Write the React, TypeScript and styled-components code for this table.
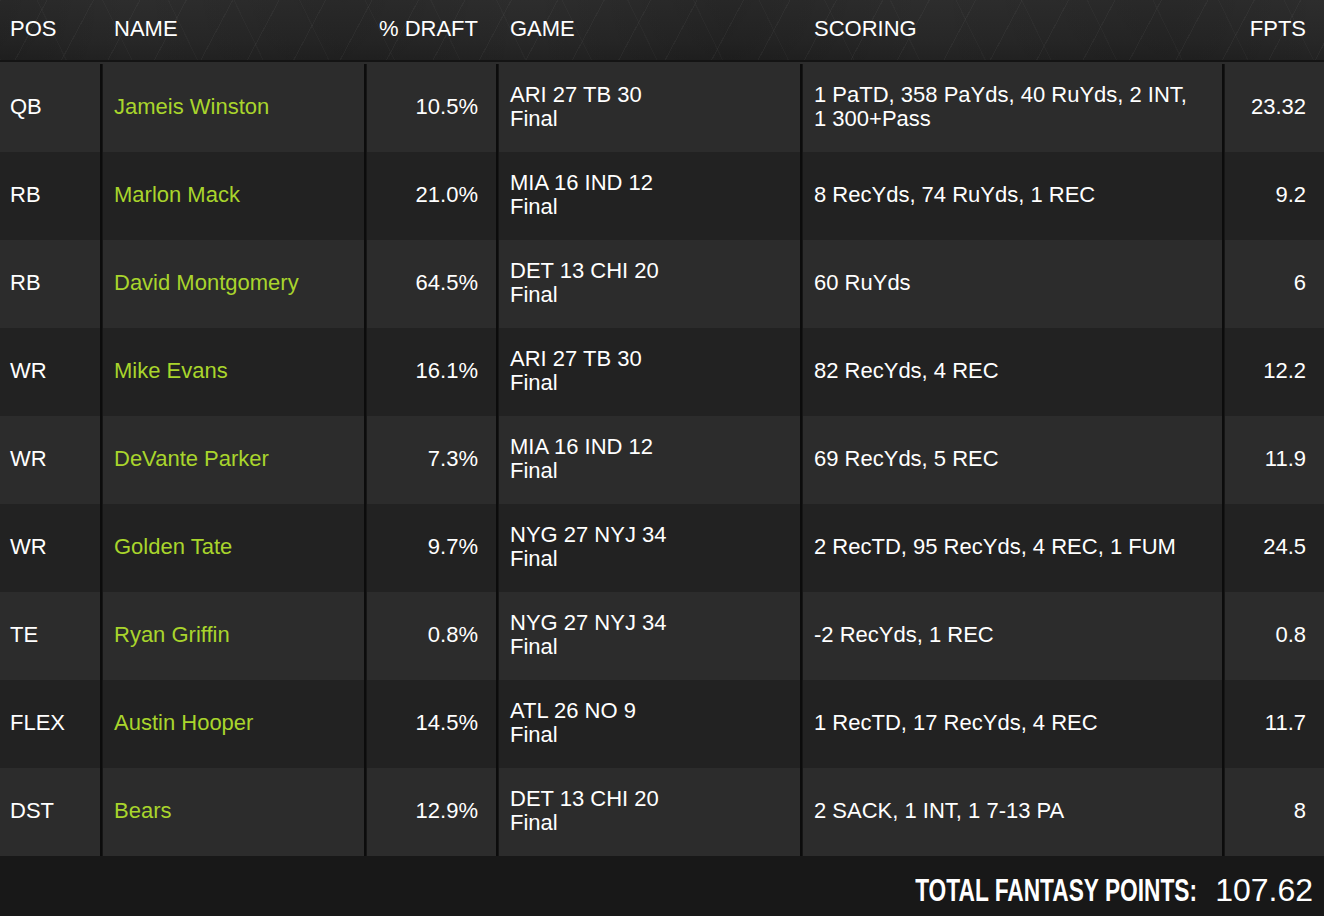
import React from 'react'
import styled, { createGlobalStyle } from 'styled-components'

const GlobalStyle = createGlobalStyle`
  html, body {
    margin: 0;
    padding: 0;
    background: #181818;
  }
  body {
    font-family: "Liberation Sans", Arial, Helvetica, sans-serif;
    color: #ffffff;
  }
`

const COLUMNS = '100px 264px 132px 304px 422px 102px'

export const Board = styled.div`
  width: 1324px;
  height: 916px;
  display: flex;
  flex-direction: column;
  overflow: hidden;
`

// scratched chalkboard look of the header strip
export const HeaderBar = styled.div`
  display: grid;
  grid-template-columns: ${COLUMNS};
  height: 60px;
  border-bottom: 2px solid #141414;
  background-color: #282828;
  background-image:
    repeating-linear-gradient(118deg, rgba(255, 255, 255, 0.035) 0 1px, transparent 1px 41px),
    repeating-linear-gradient(64deg, rgba(255, 255, 255, 0.025) 0 1px, transparent 1px 59px),
    linear-gradient(90deg, rgba(0, 0, 0, 0.12) 0%, rgba(0, 0, 0, 0) 10%, rgba(0, 0, 0, 0.1) 26%, rgba(0, 0, 0, 0) 40%, rgba(0, 0, 0, 0.14) 55%, rgba(0, 0, 0, 0) 70%, rgba(0, 0, 0, 0.1) 88%, rgba(0, 0, 0, 0) 100%),
    linear-gradient(180deg, #2d2d2d 0%, #272727 70%, #222222 100%);
`

export const HeadCell = styled.div<{ $right?: boolean }>`
  display: flex;
  align-items: center;
  justify-content: ${p => (p.$right ? 'flex-end' : 'flex-start')};
  padding: ${p => (p.$right ? '0 18px 0 0' : '0 0 0 14px')};
  padding-bottom: 2px;
  font-size: 22px;
  color: #ffffff;

  &:first-child {
    padding-left: 10px;
  }
`

export const Row = styled.div<{ $odd: boolean; $first?: boolean }>`
  display: grid;
  grid-template-columns: ${COLUMNS};
  height: ${p => (p.$first ? 90 : 88)}px;
  box-sizing: border-box;
  padding-top: ${p => (p.$first ? 2 : 0)}px;
  background: ${p => (p.$odd ? '#2c2c2c' : '#222222')};
`

export const Cell = styled.div<{ $right?: boolean; $green?: boolean }>`
  display: flex;
  flex-direction: column;
  justify-content: center;
  align-items: ${p => (p.$right ? 'flex-end' : 'flex-start')};
  padding: ${p => (p.$right ? '0 18px 0 0' : '0 0 0 12px')};
  padding-bottom: 3px;
  font-size: 22px;
  line-height: 24px;
  color: ${p => (p.$green ? '#a9d52c' : '#ffffff')};
  border-left: 2px solid #0c0c0c;
  box-shadow: inset 1px 0 0 #161616;

  &:first-child {
    border-left: none;
    box-shadow: none;
    padding-left: 10px;
  }
`

export const Footer = styled.div`
  flex: 1;
  display: flex;
  align-items: center;
  justify-content: flex-end;
  gap: 18px;
  padding: 8px 11px 0 0;
  background: #181818;
`

export const TotalLabel = styled.span`
  font-family: "Liberation Sans", Arial, sans-serif;
  font-weight: 700;
  font-size: 32px;
  display: inline-block;
  transform: scaleX(0.71);
  transform-origin: right center;
  margin-left: -120px;
`

export const TotalValue = styled.span`
  font-size: 32px;
`

type Player = {
  pos: string
  name: string
  draft: string
  game: string
  scoring: string[]
  fpts: string
}

const players: Player[] = [
  { pos: 'QB', name: 'Jameis Winston', draft: '10.5%', game: 'ARI 27 TB 30', scoring: ['1 PaTD, 358 PaYds, 40 RuYds, 2 INT,', '1 300+Pass'], fpts: '23.32' },
  { pos: 'RB', name: 'Marlon Mack', draft: '21.0%', game: 'MIA 16 IND 12', scoring: ['8 RecYds, 74 RuYds, 1 REC'], fpts: '9.2' },
  { pos: 'RB', name: 'David Montgomery', draft: '64.5%', game: 'DET 13 CHI 20', scoring: ['60 RuYds'], fpts: '6' },
  { pos: 'WR', name: 'Mike Evans', draft: '16.1%', game: 'ARI 27 TB 30', scoring: ['82 RecYds, 4 REC'], fpts: '12.2' },
  { pos: 'WR', name: 'DeVante Parker', draft: '7.3%', game: 'MIA 16 IND 12', scoring: ['69 RecYds, 5 REC'], fpts: '11.9' },
  { pos: 'WR', name: 'Golden Tate', draft: '9.7%', game: 'NYG 27 NYJ 34', scoring: ['2 RecTD, 95 RecYds, 4 REC, 1 FUM'], fpts: '24.5' },
  { pos: 'TE', name: 'Ryan Griffin', draft: '0.8%', game: 'NYG 27 NYJ 34', scoring: ['-2 RecYds, 1 REC'], fpts: '0.8' },
  { pos: 'FLEX', name: 'Austin Hooper', draft: '14.5%', game: 'ATL 26 NO 9', scoring: ['1 RecTD, 17 RecYds, 4 REC'], fpts: '11.7' },
  { pos: 'DST', name: 'Bears', draft: '12.9%', game: 'DET 13 CHI 20', scoring: ['2 SACK, 1 INT, 1 7-13 PA'], fpts: '8' }
]

export default function App() {
  return (
    <>
      <GlobalStyle />
      <Board>
        <HeaderBar>
          <HeadCell>POS</HeadCell>
          <HeadCell>NAME</HeadCell>
          <HeadCell $right>% DRAFT</HeadCell>
          <HeadCell>GAME</HeadCell>
          <HeadCell>SCORING</HeadCell>
          <HeadCell $right>FPTS</HeadCell>
        </HeaderBar>
        {players.map((p, i) => (
          <Row key={i} $odd={i % 2 === 0} $first={i === 0}>
            <Cell>{p.pos}</Cell>
            <Cell $green>{p.name}</Cell>
            <Cell $right>{p.draft}</Cell>
            <Cell>
              <span>{p.game}</span>
              <span>Final</span>
            </Cell>
            <Cell>
              {p.scoring.map((line, j) => (
                <span key={j}>{line}</span>
              ))}
            </Cell>
            <Cell $right>{p.fpts}</Cell>
          </Row>
        ))}
        <Footer>
          <TotalLabel>TOTAL FANTASY POINTS:</TotalLabel>
          <TotalValue>107.62</TotalValue>
        </Footer>
      </Board>
    </>
  )
}
